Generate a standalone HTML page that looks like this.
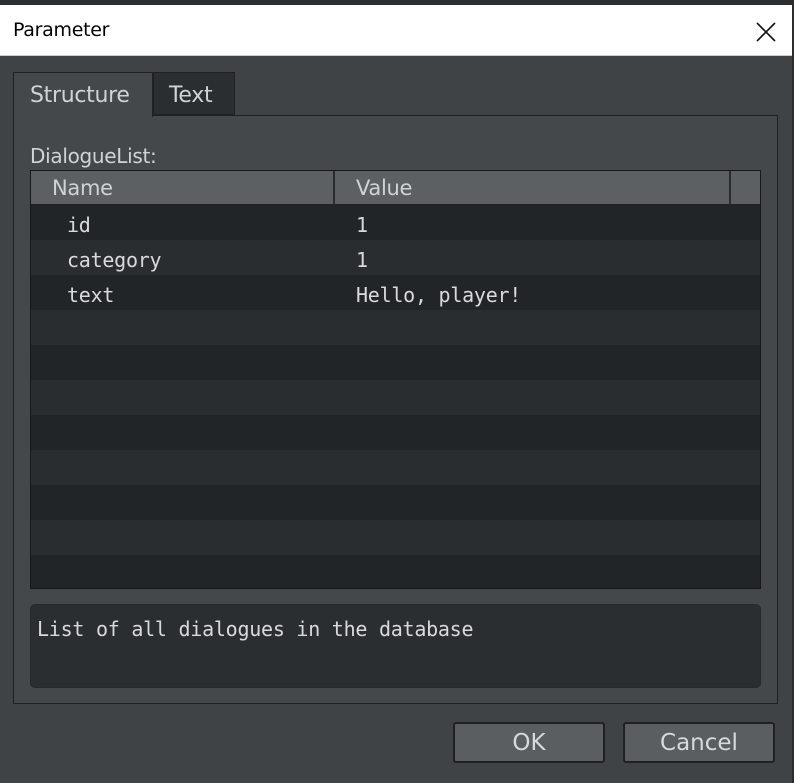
<!DOCTYPE html>
<html><head><style>
*{margin:0;padding:0;box-sizing:border-box}
body{width:794px;height:783px;background:#404346;position:relative;overflow:hidden;font-family:"DejaVu Sans","Liberation Sans",sans-serif;}
.topstrip{position:absolute;left:0;top:0;width:794px;height:5px;background:#2b2e31}
.title{position:absolute;left:0;top:5px;width:792px;height:51px;background:#fff;border-bottom:1px solid #ccc}
.title span{position:absolute;left:13px;top:14px;font-size:19px;color:#000;font-family:"DejaVu Sans",sans-serif;letter-spacing:-0.3px}
.x{position:absolute;left:755px;top:16px}
.rightedge{position:absolute;left:792px;top:0;width:2px;height:783px;background:#2b2e31}
.panel{position:absolute;left:13px;top:115px;width:765px;height:589px;border:1px solid #1e2022;background:#45484b}
.tab{position:absolute;font-size:22px;color:#cfd3d6;letter-spacing:-0.3px}
.t1{left:13px;top:72px;width:140px;height:45px;background:#45484b;border:1px solid #1e2022;border-bottom:none;padding:10px 0 0 16px;z-index:2}
.t2{left:153px;top:72px;width:82px;height:43px;background:#2b2e30;border:1px solid #1e2022;padding:10px 0 0 15px}
.lbl{position:absolute;left:30px;top:144px;font-size:20px;color:#cfd3d6;letter-spacing:-0.3px}
.table{position:absolute;left:30px;top:170px;width:731px;height:419px;border:1px solid #161819;background:#232628;overflow:hidden}
.hdr{position:absolute;top:0;height:34px;background:#5c6063;border-right:2px solid #2a2c2e;border-bottom:1px solid #222;font-size:21px;color:#cfd3d6;padding:5px 0 0 21px;letter-spacing:-0.3px}
.row{position:absolute;left:0;width:731px;height:35px;font-family:"DejaVu Sans Mono","Liberation Mono",monospace;font-size:20px;color:#d8dadc;letter-spacing:-0.25px}
.row span{position:absolute;top:8px}
.desc{position:absolute;left:30px;top:604px;width:731px;height:84px;border:1px solid #26292b;border-radius:5px;background:#2b2e30;font-family:"DejaVu Sans Mono","Liberation Mono",monospace;font-size:20px;color:#d8dadc;padding:12px 0 0 6px;letter-spacing:-0.25px}
.btn{position:absolute;top:722px;width:152px;height:41px;background:#5a5e61;border:2px solid #1f2123;border-radius:3px;font-size:23px;color:#d6dadd;text-align:center;line-height:39px}
</style></head><body>
<div class="topstrip"></div>
<div class="title"><span>Parameter</span>
<svg class="x" width="22" height="22" viewBox="0 0 22 22"><path d="M2 2L20 20M20 2L2 20" stroke="#111" stroke-width="1.6"/></svg></div>
<div class="rightedge"></div>
<div class="panel"></div>
<div class="tab t1">Structure</div>
<div class="tab t2">Text</div>
<div class="lbl">DialogueList:</div>
<div class="table">
<div class="hdr" style="left:0;width:304px">Name</div>
<div class="hdr" style="left:304px;width:396px">Value</div>
<div class="hdr" style="left:700px;width:31px;border-right:none;padding:0"></div>
<div class="row" style="top:34px;background:#222527"><span style="left:36px">id</span><span style="left:325px">1</span></div>
<div class="row" style="top:69px;background:#2a2d30"><span style="left:36px">category</span><span style="left:325px">1</span></div>
<div class="row" style="top:104px;background:#222527"><span style="left:36px">text</span><span style="left:325px">Hello, player!</span></div>
<div class="row" style="top:139px;background:#2a2d30"></div>
<div class="row" style="top:174px;background:#222527"></div>
<div class="row" style="top:209px;background:#2a2d30"></div>
<div class="row" style="top:244px;background:#222527"></div>
<div class="row" style="top:279px;background:#2a2d30"></div>
<div class="row" style="top:314px;background:#222527"></div>
<div class="row" style="top:349px;background:#2a2d30"></div>
<div class="row" style="top:384px;background:#222527"></div>
</div>
<div class="desc">List of all dialogues in the database</div>
<div class="btn" style="left:453px">OK</div>
<div class="btn" style="left:623px">Cancel</div>
</body></html>
